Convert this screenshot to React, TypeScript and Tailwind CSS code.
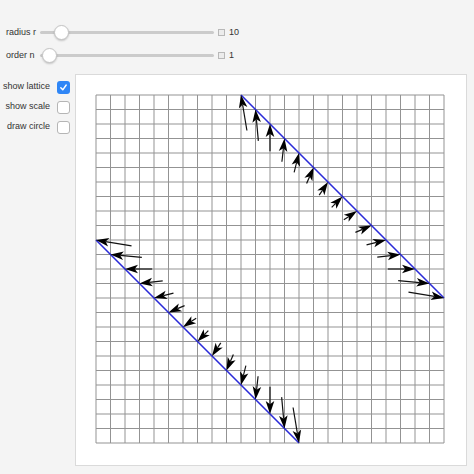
import React from 'react'

const CELL = 14.5
const ORIGIN = 20
const px = (gx: number) => ORIGIN + (gx + 12) * CELL
const py = (gy: number) => ORIGIN + (12 - gy) * CELL

function arrowFor(gx: number, gy: number) {
  const tx = px(gx)
  const ty = py(gy)
  const r = Math.hypot(gx, gy)
  const len = 4.07 * r - 13.5
  // direction in screen space, pointing outward
  const dx = gx / r
  const dy = -gy / r
  const sx = tx - dx * len
  const sy = ty - dy * len
  const hl = 13
  const hw = 4.3
  const bx = tx - dx * hl
  const by = ty - dy * hl
  const nx = -dy
  const ny = dx
  const notchX = tx - dx * hl * 0.75
  const notchY = ty - dy * hl * 0.75
  const head = `${tx},${ty} ${bx + nx * hw},${by + ny * hw} ${notchX},${notchY} ${bx - nx * hw},${by - ny * hw}`
  return { sx, sy, notchX, notchY, head }
}

const points: [number, number][] = []
for (let x = -2; x <= 12; x++) points.push([x, 10 - x])
for (let x = -12; x <= 2; x++) points.push([x, -10 - x])

function Plot() {
  const lines = Array.from({ length: 25 }, (_, i) => ORIGIN + i * CELL)
  return (
    <svg width="390" height="390" viewBox="0 0 390 390">
      {lines.map((v, i) => (
        <g key={i}>
          <line x1={v} y1={ORIGIN} x2={v} y2={ORIGIN + 24 * CELL} stroke="#939393" strokeWidth="1" />
          <line x1={ORIGIN} y1={v} x2={ORIGIN + 24 * CELL} y2={v} stroke="#939393" strokeWidth="1" />
        </g>
      ))}
      <line x1={px(-2)} y1={py(12)} x2={px(12)} y2={py(-2)} stroke="#2a2ad8" strokeWidth="1.6" />
      <line x1={px(-12)} y1={py(2)} x2={px(2)} y2={py(-12)} stroke="#2a2ad8" strokeWidth="1.6" />
      {points.map(([gx, gy], i) => {
        const a = arrowFor(gx, gy)
        return (
          <g key={i}>
            <line x1={a.sx} y1={a.sy} x2={a.notchX} y2={a.notchY} stroke="#111" strokeWidth="1.2" />
            <polygon points={a.head} fill="#000" />
          </g>
        )
      })}
    </svg>
  )
}

function Slider({ label, value, thumb }: { label: string; value: string; thumb: 'r' | 'n' }) {
  return (
    <div className="flex h-[23px] items-center">
      <span className="w-[34px] shrink-0 whitespace-nowrap">{label}</span>
      <div className="relative h-[23px] w-[174px]">
        <div className="absolute left-0 right-0 top-[10px] h-[3px] rounded-full bg-[#cbcbcb]" />
        <div
          className={
            thumb === 'r'
              ? 'absolute left-[14px] top-[4px] h-[15px] w-[15px] rounded-full border border-[#c4c4c4] bg-white shadow-[0_1px_2px_rgba(0,0,0,0.2)]'
              : 'absolute left-[1.5px] top-[4px] h-[15px] w-[15px] rounded-full border border-[#c4c4c4] bg-white shadow-[0_1px_2px_rgba(0,0,0,0.2)]'
          }
        />
      </div>
      <div className="ml-[4px] h-[7px] w-[7px] border border-[#b8b8b8] bg-[#ececec]" />
      <span className="ml-[4px]">{value}</span>
    </div>
  )
}

function Check({ label, checked }: { label: string; checked?: boolean }) {
  return (
    <div className="flex h-[20px] items-center justify-end gap-[7px]">
      <span className="whitespace-nowrap">{label}</span>
      {checked ? (
        <div className="grid h-[13px] w-[13px] place-items-center rounded-[3px] bg-[#2f86f6]">
          <svg width="9" height="9" viewBox="0 0 10 10">
            <path d="M2 5.3 L4.2 7.6 L8 2.2" fill="none" stroke="#fff" strokeWidth="1.6" strokeLinecap="round" strokeLinejoin="round" />
          </svg>
        </div>
      ) : (
        <div className="h-[13px] w-[13px] rounded-[3px] border border-[#b5b5b5] bg-white" />
      )}
    </div>
  )
}

export default function App() {
  return (
    <div className="h-[474px] w-[474px] overflow-hidden bg-[#f4f4f4] font-['Liberation_Sans',Arial,sans-serif] text-[9px] text-[#333]">
      <div className="px-[6px] pt-[21px]">
        <Slider label="radius r" value="10" thumb="r" />
        <Slider label="order n" value="1" thumb="n" />
      </div>
      <div className="mt-[7px] flex">
        <div className="w-[70px] pt-[3px]">
          <Check label="show lattice" checked />
          <Check label="show scale" />
          <Check label="draw circle" />
        </div>
        <div className="ml-[5px] h-[392px] w-[392px] border border-[#dadada] bg-white">
          <Plot />
        </div>
      </div>
    </div>
  )
}
